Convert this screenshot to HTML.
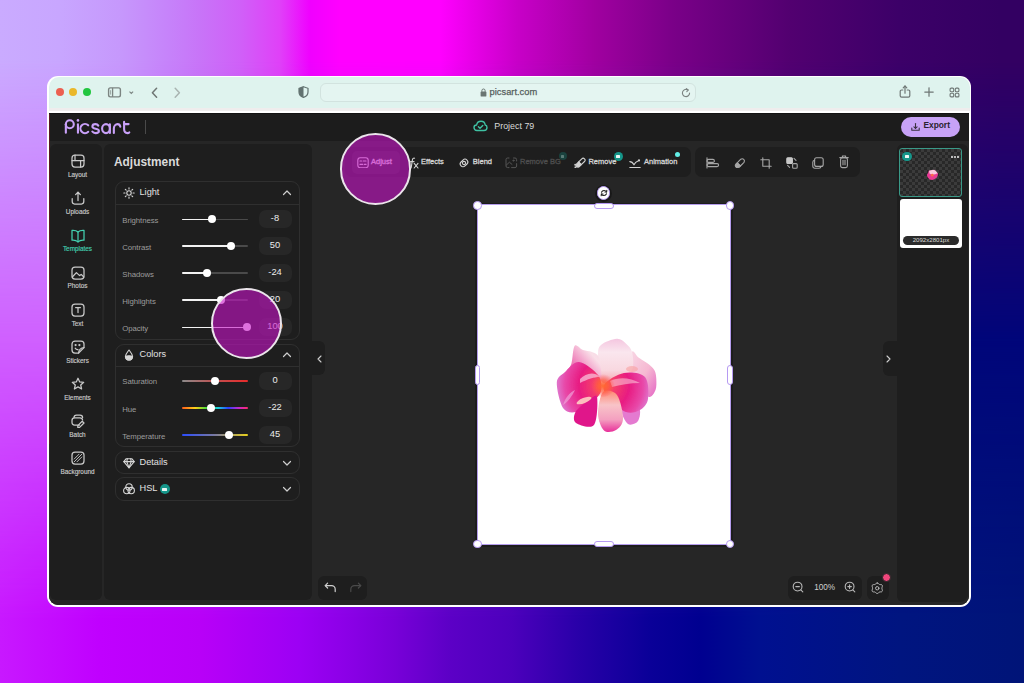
<!DOCTYPE html>
<html><head><meta charset="utf-8">
<style>
*{margin:0;padding:0;box-sizing:border-box}
html,body{width:1024px;height:683px;overflow:hidden}
body{position:relative;font-family:"Liberation Sans",sans-serif;background:#1a0a6d}
.a{position:absolute}
.bgB{left:0;top:0;width:1024px;height:683px;background:linear-gradient(90deg,#d060ff 0px,#d060ff 47px,#00067a 971px,#00067a 1024px)}
.bgC{left:0;top:0;width:1024px;height:683px;background:linear-gradient(90deg,#c818ff 0px,#c000ff 100px,#b800f8 200px,#9c00f4 300px,#8a00e6 350px,#7800d8 395px,#5c00c6 450px,#4c00bc 512px,#2800a8 580px,#0a0098 650px,#000090 700px,#001090 760px,#001580 900px,#001478 1024px);
 -webkit-mask-image:linear-gradient(180deg,transparent 0,transparent 340px,#000 620px,#000 683px)}
.bgA{left:0;top:0;width:1024px;height:683px;background:linear-gradient(90deg,#caabff 0px,#c8a6ff 60px,#c698fc 120px,#c682fa 170px,#c874f8 200px,#d060f8 240px,#e040f8 280px,#f000ff 310px,#ff00ff 340px,#ff00ff 440px,#c800c8 517px,#a000a0 595px,#7a0088 673px,#520070 790px,#3c0068 900px,#330062 1000px,#330062 1024px);
 -webkit-mask-image:linear-gradient(180deg,#000 0,#000 60px,transparent 340px)}
.win{left:47px;top:76px;width:924px;height:531px;border-radius:11px;background:#fff}
.tab{left:48.5px;top:77px;width:921px;height:31px;border-radius:10px 10px 0 0;background:#dff3ee}
.tabline{left:48.5px;top:108px;width:921px;height:3px;background:#efeded}
.app{left:49px;top:112.5px;width:920px;height:492px;background:#1c1c1c;border-radius:0 0 9px 9px;overflow:hidden}
.ws{left:49px;top:141px;width:920px;height:463.5px;background:#262626;border-radius:0 0 9px 9px}
.panel{background:#1e1e1e}
.txt{white-space:nowrap;line-height:1}
</style></head><body>
<div class="a bgB"></div>
<div class="a bgC"></div>
<div class="a bgA"></div>

<div class="a win"></div>
<div class="a tab"></div>
<div class="a tabline"></div>
<div class="a app"></div>
<div class="a ws"></div>


<!-- tab bar -->
<div class="a" style="left:55.9px;top:88.3px;width:8.2px;height:8.2px;border-radius:50%;background:#ec6050"></div>
<div class="a" style="left:69.2px;top:88.3px;width:8.2px;height:8.2px;border-radius:50%;background:#eab82a"></div>
<div class="a" style="left:82.5px;top:88.3px;width:8.2px;height:8.2px;border-radius:50%;background:#22c640"></div>
<svg class="a" style="left:106px;top:86px" width="32" height="14" viewBox="0 0 32 14" fill="none" stroke="#7c8582" stroke-width="1.2">
<rect x="2.6" y="1.9" width="11.8" height="9" rx="1.8" stroke-width="1.4"/><line x1="6.6" y1="1.9" x2="6.6" y2="10.9" stroke-width="1.3"/>
<line x1="4.6" y1="4.2" x2="4.6" y2="8.6" stroke-width="0.7"/>
<polyline points="23.5,5.6 25.3,7.4 27.1,5.6" stroke-width="1.1"/></svg>
<svg class="a" style="left:148px;top:86px" width="36" height="14" viewBox="0 0 36 14" fill="none" stroke-width="1.5" stroke-linecap="round" stroke-linejoin="round">
<polyline points="8.6,2.2 4.4,6.7 8.6,11.2" stroke="#6f7674"/><polyline points="27.2,2.2 31.4,6.7 27.2,11.2" stroke="#a9b4b1"/></svg>
<svg class="a" style="left:298.4px;top:86.4px" width="11" height="12" viewBox="0 0 11 12">
<path d="M5.5 0.7 L10 2.3 V5.9 C10 8.7 8 10.5 5.5 11.4 C3 10.5 1 8.7 1 5.9 V2.3 Z" fill="none" stroke="#627270" stroke-width="1.2"/>
<path d="M5.5 0.7 V11.4 C3 10.5 1 8.7 1 5.9 V2.3 Z" fill="#627270"/></svg>
<div class="a" style="left:319.5px;top:83.3px;width:376px;height:18.5px;border-radius:6px;background:#e4f5f1;border:1px solid #d2e3df"></div>
<svg class="a" style="left:479.6px;top:88.4px" width="7" height="9" viewBox="0 0 7 9"><rect x="0.6" y="3.6" width="5.8" height="5" rx="0.9" fill="#6a7572"/><path d="M1.9 3.8 V2.6 A1.6 1.6 0 0 1 5.1 2.6 V3.8" fill="none" stroke="#6a7572" stroke-width="1"/></svg>
<div class="a txt" style="left:489.6px;top:88.2px;font-size:9.3px;color:#56605d;-webkit-text-stroke:0.25px #56605d">picsart.com</div>
<svg class="a" style="left:680px;top:86.5px" width="12" height="12" viewBox="0 0 12 12" fill="none" stroke="#7b8381" stroke-width="1.1" stroke-linecap="round">
<path d="M9.6 6 A3.6 3.6 0 1 1 8 3"/><polyline points="6.5,1.6 8.2,3 6.8,4.6"/></svg>
<svg class="a" style="left:899.4px;top:85.2px" width="12" height="13" viewBox="0 0 12 13" fill="none" stroke="#6f7775" stroke-width="1.2" stroke-linecap="round" stroke-linejoin="round">
<path d="M3.8 5 H2.6 A1.4 1.4 0 0 0 1.2 6.4 V10.8 A1.4 1.4 0 0 0 2.6 12.2 H9.4 A1.4 1.4 0 0 0 10.8 10.8 V6.4 A1.4 1.4 0 0 0 9.4 5 H8.2"/>
<line x1="6" y1="1.2" x2="6" y2="8.2"/><polyline points="4.2,2.8 6,1 7.8,2.8"/></svg>
<svg class="a" style="left:924.2px;top:87.2px" width="10" height="10" viewBox="0 0 10 10" stroke="#6f7775" stroke-width="1.25" stroke-linecap="round">
<line x1="5" y1="0.8" x2="5" y2="9.2"/><line x1="0.8" y1="5" x2="9.2" y2="5"/></svg>
<svg class="a" style="left:948.5px;top:87px" width="11" height="11" viewBox="0 0 11 11" fill="none" stroke="#6f7775" stroke-width="1.1">
<rect x="1.1" y="1.1" width="3.6" height="3.6" rx="1"/><rect x="6.3" y="1.1" width="3.6" height="3.6" rx="1"/>
<rect x="1.1" y="6.3" width="3.6" height="3.6" rx="1"/><rect x="6.3" y="6.3" width="3.6" height="3.6" rx="1"/></svg>


<!-- panels -->
<div class="a panel" style="left:50px;top:143.5px;width:52px;height:456px;border-radius:6px"></div>
<div class="a" style="left:49px;top:112.5px;width:1px;height:331px;background:#5a1422"></div>
<div class="a panel" style="left:104px;top:143.5px;width:207.7px;height:456px;border-radius:6px"></div>
<div class="a panel" style="left:896.7px;top:143.5px;width:71.3px;height:458px;border-radius:6px 6px 8px 6px"></div>
<div class="a panel" style="left:311px;top:341px;width:14px;height:34px;border-radius:0 6px 6px 0"></div>
<div class="a panel" style="left:883.3px;top:341.3px;width:14px;height:34.7px;border-radius:6px 0 0 6px"></div>

<!-- sidebar -->
<svg class="a" style="left:70.5px;top:154.3px" width="14" height="14" viewBox="0 0 14 14" fill="none" stroke="#c9c9c9" stroke-width="1.25" stroke-linecap="round" stroke-linejoin="round"><rect x="1" y="1" width="12" height="12" rx="3"/><line x1="1" y1="6.6" x2="13" y2="6.6"/><line x1="4" y1="1" x2="4" y2="6.6"/><line x1="9.6" y1="6.6" x2="9.6" y2="13"/></svg>
<div class="a txt" style="left:50px;width:55px;text-align:center;top:172.0px;font-size:6.4px;color:#c9c9c9;-webkit-text-stroke:0.15px #c9c9c9;">Layout</div>
<svg class="a" style="left:70.5px;top:191.4px" width="14" height="14" viewBox="0 0 14 14" fill="none" stroke="#c9c9c9" stroke-width="1.25" stroke-linecap="round" stroke-linejoin="round"><path d="M1.2 7.6 V10.6 A2.4 2.4 0 0 0 3.6 13 H10.4 A2.4 2.4 0 0 0 12.8 10.6 V7.6"/><line x1="7" y1="9.5" x2="7" y2="1.3"/><polyline points="4.6,3.6 7,1.2 9.4,3.6"/></svg>
<div class="a txt" style="left:50px;width:55px;text-align:center;top:209.1px;font-size:6.4px;color:#c9c9c9;-webkit-text-stroke:0.15px #c9c9c9;">Uploads</div>
<svg class="a" style="left:70.5px;top:228.5px" width="14" height="14" viewBox="0 0 14 14" fill="none" stroke="#44d1b1" stroke-width="1.25" stroke-linecap="round" stroke-linejoin="round"><path d="M7 3 C5.5 1.6 3.4 1.2 1 1.4 V11.2 C3.4 11 5.5 11.5 7 12.9 C8.5 11.5 10.6 11 13 11.2 V1.4 C10.6 1.2 8.5 1.6 7 3 Z"/><line x1="7" y1="3" x2="7" y2="12.9"/></svg>
<div class="a txt" style="left:50px;width:55px;text-align:center;top:246.2px;font-size:6.4px;color:#44d1b1;-webkit-text-stroke:0.15px #44d1b1;">Templates</div>
<svg class="a" style="left:70.5px;top:265.7px" width="14" height="14" viewBox="0 0 14 14" fill="none" stroke="#c9c9c9" stroke-width="1.25" stroke-linecap="round" stroke-linejoin="round"><rect x="1" y="1" width="12" height="12" rx="3"/><path d="M1.3 11 L5.4 6.6 L8.6 9.6 L10.2 8.4 L12.8 11"/></svg>
<div class="a txt" style="left:50px;width:55px;text-align:center;top:283.4px;font-size:6.4px;color:#c9c9c9;-webkit-text-stroke:0.15px #c9c9c9;">Photos</div>
<svg class="a" style="left:70.5px;top:302.8px" width="14" height="14" viewBox="0 0 14 14" fill="none" stroke="#c9c9c9" stroke-width="1.25" stroke-linecap="round" stroke-linejoin="round"><rect x="1" y="1" width="12" height="12" rx="3"/><line x1="4.6" y1="4.6" x2="9.4" y2="4.6"/><line x1="7" y1="4.6" x2="7" y2="9.6"/></svg>
<div class="a txt" style="left:50px;width:55px;text-align:center;top:320.5px;font-size:6.4px;color:#c9c9c9;-webkit-text-stroke:0.15px #c9c9c9;">Text</div>
<svg class="a" style="left:70.5px;top:339.9px" width="14" height="14" viewBox="0 0 14 14" fill="none" stroke="#c9c9c9" stroke-width="1.25" stroke-linecap="round" stroke-linejoin="round"><path d="M13 7.6 V4 A3 3 0 0 0 10 1 H4 A3 3 0 0 0 1 4 V10 A3 3 0 0 0 4 13 H7.6 Z"/><path d="M7.6 13 C7.6 10 10 7.6 13 7.6"/><circle cx="4.6" cy="5" r="0.5"/><circle cx="8.4" cy="5" r="0.5"/><path d="M4.2 8.2 C5 9.4 6 9.8 7 9.6"/></svg>
<div class="a txt" style="left:50px;width:55px;text-align:center;top:357.6px;font-size:6.4px;color:#c9c9c9;-webkit-text-stroke:0.15px #c9c9c9;">Stickers</div>
<svg class="a" style="left:70.5px;top:377.0px" width="14" height="14" viewBox="0 0 14 14" fill="none" stroke="#c9c9c9" stroke-width="1.25" stroke-linecap="round" stroke-linejoin="round"><path d="M7 1.2 L8.7 4.9 L12.7 5.3 L9.7 8 L10.6 12 L7 9.9 L3.4 12 L4.3 8 L1.3 5.3 L5.3 4.9 Z"/></svg>
<div class="a txt" style="left:50px;width:55px;text-align:center;top:394.7px;font-size:6.4px;color:#c9c9c9;-webkit-text-stroke:0.15px #c9c9c9;">Elements</div>
<svg class="a" style="left:70.5px;top:414.1px" width="14" height="14" viewBox="0 0 14 14" fill="none" stroke="#c9c9c9" stroke-width="1.25" stroke-linecap="round" stroke-linejoin="round"><path d="M3 3.5 C3 2 4 1 5.5 1 H9 C10.6 1 11.6 2 11.6 3.5"/><path d="M8.5 11 H3.6 C2 11 1 10 1 8.5 V6.4 C1 4.9 2 3.9 3.6 3.9 H9 C10.4 3.9 11.4 4.7 11.6 6"/><path d="M6.8 11.6 L11.2 7.2 L13 9 L8.6 13.4 L6.8 13.4 Z"/></svg>
<div class="a txt" style="left:50px;width:55px;text-align:center;top:431.8px;font-size:6.4px;color:#c9c9c9;-webkit-text-stroke:0.15px #c9c9c9;">Batch</div>
<svg class="a" style="left:70.5px;top:451.3px" width="14" height="14" viewBox="0 0 14 14" fill="none" stroke="#c9c9c9" stroke-width="1.25" stroke-linecap="round" stroke-linejoin="round"><rect x="1" y="1" width="12" height="12" rx="3"/><line x1="3.2" y1="8" x2="8" y2="3.2" stroke-width="0.9"/><line x1="3.2" y1="10.8" x2="10.8" y2="3.2" stroke-width="0.9"/><line x1="6" y1="10.8" x2="10.8" y2="6" stroke-width="0.9"/></svg>
<div class="a txt" style="left:50px;width:55px;text-align:center;top:469.0px;font-size:6.4px;color:#c9c9c9;-webkit-text-stroke:0.15px #c9c9c9;">Background</div>
<!-- adjustment panel -->
<div class="a txt" style="left:114px;top:156.6px;font-size:11.9px;font-weight:700;color:#dadada">Adjustment</div>
<div class="a" style="left:114.6px;top:180.8px;width:185.6px;height:159.2px;border:1px solid #2f2f2f;border-radius:9px"></div>
<svg class="a" style="left:122.6px;top:186.8px" width="12" height="12" viewBox="0 0 12 12" fill="none" stroke="#d6d6d6" stroke-width="1.1" stroke-linecap="round" stroke-linejoin="round"><circle cx="6" cy="6" r="2.2"/><line x1="6" y1="0.8" x2="6" y2="2"/><line x1="6" y1="10" x2="6" y2="11.2"/><line x1="0.8" y1="6" x2="2" y2="6"/><line x1="10" y1="6" x2="11.2" y2="6"/><line x1="2.3" y1="2.3" x2="3.2" y2="3.2"/><line x1="8.8" y1="8.8" x2="9.7" y2="9.7"/><line x1="2.3" y1="9.7" x2="3.2" y2="8.8"/><line x1="8.8" y1="3.2" x2="9.7" y2="2.3"/></svg><div class="a txt" style="left:139.5px;top:188.1px;font-size:9.2px;color:#e2e2e2">Light</div>
<svg class="a" style="left:282.3px;top:188.5px" width="10" height="8" viewBox="0 0 10 8" fill="none" stroke="#cfcfcf" stroke-width="1.2" stroke-linecap="round" stroke-linejoin="round"><polyline points="1.5,5.5 5,2 8.5,5.5"/></svg>
<div class="a" style="left:115.6px;top:203.6px;width:183.6px;height:1px;background:#2f2f2f"></div>
<div class="a txt" style="left:122.3px;top:216.8px;font-size:7.8px;letter-spacing:-0.08px;color:#9c9c9c">Brightness</div><div class="a" style="left:181.6px;top:218.6px;width:66.2px;height:1.5px;background:#4a4a4a;border-radius:1px"></div><div class="a" style="left:181.6px;top:218.6px;width:30.1px;height:1.5px;background:#f2f2f2;border-radius:1px"></div><div class="a" style="left:207.7px;top:215.3px;width:8px;height:8px;border-radius:50%;background:#fff"></div><div class="a" style="left:258.5px;top:210.3px;width:33px;height:17.8px;border-radius:7px;background:#272727"></div><div class="a txt" style="left:258.5px;width:33px;text-align:center;top:214.3px;font-size:9.3px;color:#ececec">-8</div>
<div class="a txt" style="left:122.3px;top:243.5px;font-size:7.8px;letter-spacing:-0.08px;color:#9c9c9c">Contrast</div><div class="a" style="left:181.6px;top:245.2px;width:66.2px;height:1.5px;background:#4a4a4a;border-radius:1px"></div><div class="a" style="left:181.6px;top:245.2px;width:49.4px;height:1.5px;background:#f2f2f2;border-radius:1px"></div><div class="a" style="left:227.0px;top:242.0px;width:8px;height:8px;border-radius:50%;background:#fff"></div><div class="a" style="left:258.5px;top:237.0px;width:33px;height:17.8px;border-radius:7px;background:#272727"></div><div class="a txt" style="left:258.5px;width:33px;text-align:center;top:241.0px;font-size:9.3px;color:#ececec">50</div>
<div class="a txt" style="left:122.3px;top:270.7px;font-size:7.8px;letter-spacing:-0.08px;color:#9c9c9c">Shadows</div><div class="a" style="left:181.6px;top:272.4px;width:66.2px;height:1.5px;background:#4a4a4a;border-radius:1px"></div><div class="a" style="left:181.6px;top:272.4px;width:25.2px;height:1.5px;background:#f2f2f2;border-radius:1px"></div><div class="a" style="left:202.8px;top:269.2px;width:8px;height:8px;border-radius:50%;background:#fff"></div><div class="a" style="left:258.5px;top:264.2px;width:33px;height:17.8px;border-radius:7px;background:#272727"></div><div class="a txt" style="left:258.5px;width:33px;text-align:center;top:268.2px;font-size:9.3px;color:#ececec">-24</div>
<div class="a txt" style="left:122.3px;top:297.5px;font-size:7.8px;letter-spacing:-0.08px;color:#9c9c9c">Highlights</div><div class="a" style="left:181.6px;top:299.2px;width:66.2px;height:1.5px;background:#4a4a4a;border-radius:1px"></div><div class="a" style="left:181.6px;top:299.2px;width:39.8px;height:1.5px;background:#f2f2f2;border-radius:1px"></div><div class="a" style="left:217.4px;top:296.0px;width:8px;height:8px;border-radius:50%;background:#fff"></div><div class="a" style="left:258.5px;top:291.0px;width:33px;height:17.8px;border-radius:7px;background:#272727"></div><div class="a txt" style="left:258.5px;width:33px;text-align:center;top:295.0px;font-size:9.3px;color:#ececec">20</div>
<div class="a txt" style="left:122.3px;top:324.9px;font-size:7.8px;letter-spacing:-0.08px;color:#9c9c9c">Opacity</div><div class="a" style="left:181.6px;top:326.6px;width:66.2px;height:1.5px;background:#4a4a4a;border-radius:1px"></div><div class="a" style="left:181.6px;top:326.6px;width:65.6px;height:1.5px;background:#f2f2f2;border-radius:1px"></div><div class="a" style="left:243.2px;top:323.4px;width:8px;height:8px;border-radius:50%;background:#fff"></div><div class="a" style="left:258.5px;top:318.4px;width:33px;height:17.8px;border-radius:7px;background:#272727"></div><div class="a txt" style="left:258.5px;width:33px;text-align:center;top:322.4px;font-size:9.3px;color:#ececec">100</div>
<div class="a" style="left:114.6px;top:343.5px;width:185.6px;height:103.9px;border:1px solid #2f2f2f;border-radius:9px"></div>
<svg class="a" style="left:122.6px;top:349.0px" width="12" height="12" viewBox="0 0 12 12" fill="none" stroke="#d6d6d6" stroke-width="1.1" stroke-linecap="round" stroke-linejoin="round"><path d="M6 1 C7.5 3 9.6 5.2 9.6 7.6 A3.6 3.6 0 0 1 2.4 7.6 C2.4 5.2 4.5 3 6 1 Z"/><path d="M2.6 7.4 C4 6.6 8 6.6 9.4 7.4 A3.4 3.4 0 0 1 2.6 7.4 Z" fill="#d6d6d6"/></svg><div class="a txt" style="left:139.5px;top:350.3px;font-size:9.2px;color:#e2e2e2">Colors</div>
<svg class="a" style="left:282.3px;top:351.0px" width="10" height="8" viewBox="0 0 10 8" fill="none" stroke="#cfcfcf" stroke-width="1.2" stroke-linecap="round" stroke-linejoin="round"><polyline points="1.5,5.5 5,2 8.5,5.5"/></svg>
<div class="a" style="left:115.6px;top:366px;width:183.6px;height:1px;background:#2f2f2f"></div>
<div class="a txt" style="left:122.3px;top:378.3px;font-size:7.8px;letter-spacing:-0.08px;color:#9c9c9c">Saturation</div><div class="a" style="left:181.6px;top:379.8px;width:66.2px;height:2px;background:linear-gradient(90deg,#8a8a8a,#c05050 50%,#e82a2a);border-radius:1px"></div><div class="a" style="left:211.0px;top:376.8px;width:8px;height:8px;border-radius:50%;background:#fff"></div><div class="a" style="left:258.5px;top:371.8px;width:33px;height:17.8px;border-radius:7px;background:#272727"></div><div class="a txt" style="left:258.5px;width:33px;text-align:center;top:375.8px;font-size:9.3px;color:#ececec">0</div>
<div class="a txt" style="left:122.3px;top:405.5px;font-size:7.8px;letter-spacing:-0.08px;color:#9c9c9c">Hue</div><div class="a" style="left:181.6px;top:407.0px;width:66.2px;height:2px;background:linear-gradient(90deg,#ff5a1a,#ffd21a 20%,#3adb3a 38%,#1ad0e0 55%,#2a40ff 70%,#c02ad0 85%,#ff2a6a);border-radius:1px"></div><div class="a" style="left:206.6px;top:404.0px;width:8px;height:8px;border-radius:50%;background:#fff"></div><div class="a" style="left:258.5px;top:399.0px;width:33px;height:17.8px;border-radius:7px;background:#272727"></div><div class="a txt" style="left:258.5px;width:33px;text-align:center;top:403.0px;font-size:9.3px;color:#ececec">-22</div>
<div class="a txt" style="left:122.3px;top:432.7px;font-size:7.8px;letter-spacing:-0.08px;color:#9c9c9c">Temperature</div><div class="a" style="left:181.6px;top:434.2px;width:66.2px;height:2px;background:linear-gradient(90deg,#2a4cff,#7a7aa0 50%,#e8d01a);border-radius:1px"></div><div class="a" style="left:224.9px;top:431.2px;width:8px;height:8px;border-radius:50%;background:#fff"></div><div class="a" style="left:258.5px;top:426.2px;width:33px;height:17.8px;border-radius:7px;background:#272727"></div><div class="a txt" style="left:258.5px;width:33px;text-align:center;top:430.2px;font-size:9.3px;color:#ececec">45</div>
<div class="a" style="left:114.6px;top:451.2px;width:185.6px;height:23.0px;border:1px solid #2f2f2f;border-radius:9px"></div>
<svg class="a" style="left:122.6px;top:456.8px" width="12" height="12" viewBox="0 0 12 12" fill="none" stroke="#d6d6d6" stroke-width="1.1" stroke-linecap="round" stroke-linejoin="round"><path d="M3 1.8 H9 L11.2 4.6 L6 10.8 L0.8 4.6 Z"/><line x1="0.8" y1="4.6" x2="11.2" y2="4.6"/><path d="M4.3 1.8 L3.8 4.6 L6 10.8 L8.2 4.6 L7.7 1.8"/></svg><div class="a txt" style="left:139.5px;top:458.1px;font-size:9.2px;color:#e2e2e2">Details</div>
<svg class="a" style="left:282.3px;top:458.8px" width="10" height="8" viewBox="0 0 10 8" fill="none" stroke="#cfcfcf" stroke-width="1.2" stroke-linecap="round" stroke-linejoin="round"><polyline points="1.5,2.5 5,6 8.5,2.5"/></svg>
<div class="a" style="left:114.6px;top:476.8px;width:185.6px;height:24.0px;border:1px solid #2f2f2f;border-radius:9px"></div>
<svg class="a" style="left:122.6px;top:482.8px" width="12" height="12" viewBox="0 0 12 12" fill="none" stroke="#d6d6d6" stroke-width="1.1" stroke-linecap="round" stroke-linejoin="round"><circle cx="6" cy="4" r="3.2"/><circle cx="3.8" cy="7.6" r="3.2"/><circle cx="8.2" cy="7.6" r="3.2"/></svg><div class="a txt" style="left:139.5px;top:484.1px;font-size:9.2px;color:#e2e2e2">HSL</div>
<svg class="a" style="left:282.3px;top:484.8px" width="10" height="8" viewBox="0 0 10 8" fill="none" stroke="#cfcfcf" stroke-width="1.2" stroke-linecap="round" stroke-linejoin="round"><polyline points="1.5,2.5 5,6 8.5,2.5"/></svg>
<div class="a" style="left:159.7px;top:484.3px;width:10px;height:10px;border-radius:50%;background:#16968a"></div><div class="a" style="left:162.4px;top:487.8px;width:4.6px;height:3px;border-radius:0.6px;background:#e8f6f4"></div>
<!-- workspace -->
<div class="a panel" style="left:345px;top:147.2px;width:346px;height:30.2px;border-radius:7px"></div>
<div class="a panel" style="left:694.6px;top:147.3px;width:165.2px;height:30px;border-radius:7px"></div>
<div class="a" style="left:351.7px;top:151.4px;width:48.5px;height:22.3px;border-radius:5px;background:#2c2c2c"></div>
<svg class="a" style="left:356.5px;top:156.8px" width="12" height="11.5" viewBox="0 0 12 11.5" fill="none" stroke="#f0f0f0" stroke-width="1.1" stroke-linecap="round" stroke-linejoin="round"><rect x="0.8" y="0.8" width="10.4" height="9.9" rx="2.4"/><line x1="3" y1="4" x2="4.6" y2="4"/><line x1="6.2" y1="4" x2="9" y2="4"/><line x1="3" y1="7.4" x2="5.8" y2="7.4"/><line x1="7.4" y1="7.4" x2="9" y2="7.4"/></svg>
<div class="a txt" style="left:371px;top:158.2px;font-size:7.5px;font-weight:400;color:#f0f0f0;-webkit-text-stroke:0.3px #f0f0f0">Adjust</div>
<svg class="a" style="left:408.5px;top:156.5px" width="10" height="12" viewBox="0 0 10 12" fill="none" stroke="#d2d2d2" stroke-width="1.1" stroke-linecap="round" stroke-linejoin="round"><path d="M5.6 1.2 C4.4 0.9 3.6 1.6 3.4 2.8 L2.2 10.6 C2 11.4 1.4 11.6 0.8 11.4"/><line x1="1.6" y1="4.6" x2="5" y2="4.6"/><line x1="5.2" y1="6.4" x2="9" y2="11"/><line x1="9" y1="6.4" x2="5.2" y2="11"/></svg>
<div class="a txt" style="left:421px;top:158.2px;font-size:7.5px;font-weight:400;color:#d4d4d4;-webkit-text-stroke:0.3px #d4d4d4">Effects</div>
<svg class="a" style="left:457.5px;top:156.6px" width="12" height="12" viewBox="0 0 12 12" fill="none" stroke="#d2d2d2" stroke-width="1.1" stroke-linecap="round" stroke-linejoin="round"><rect x="1.8" y="3.2" width="8.4" height="5.6" rx="2.8" transform="rotate(-45 6 6)"/><circle cx="6" cy="6" r="1.6"/></svg>
<div class="a txt" style="left:472.8px;top:158.2px;font-size:7.5px;font-weight:400;color:#d4d4d4;-webkit-text-stroke:0.3px #d4d4d4">Blend</div>
<svg class="a" style="left:505px;top:157px" width="12.5" height="11.5" viewBox="0 0 12.5 11.5" fill="none" stroke="#555" stroke-width="1.0" stroke-linecap="round" stroke-linejoin="round"><path d="M4 1 H2.6 A1.6 1.6 0 0 0 1 2.6 V9 A1.6 1.6 0 0 0 2.6 10.6 H4"/><path d="M8.5 1 H10 A1.6 1.6 0 0 1 11.6 2.6 V4"/><path d="M1.4 8 L4.4 5.2 L7 7.4"/><path d="M6.6 10.6 H10 A1.6 1.6 0 0 0 11.6 9 V6.6"/><circle cx="8.4" cy="3.6" r="0.6"/></svg>
<div class="a txt" style="left:520px;top:158.2px;font-size:7.5px;font-weight:400;color:#4e4e4e;-webkit-text-stroke:0.3px #4e4e4e">Remove BG</div>
<div class="a" style="left:558.6px;top:152.4px;width:8px;height:8px;border-radius:50%;background:#1a423e"></div><div class="a" style="left:560.7px;top:155.3px;width:3.8px;height:2.4px;background:#5a7a76;border-radius:0.5px"></div>
<svg class="a" style="left:574.3px;top:156.8px" width="11.5" height="11.5" viewBox="0 0 11.5 11.5" fill="none" stroke="#d2d2d2" stroke-width="1.1" stroke-linecap="round" stroke-linejoin="round"><path d="M4.6 5 L7.8 1.8 A1.9 1.9 0 0 1 10.5 4.5 L7.3 7.7 Z" fill="none"/><path d="M4.6 5 L7.3 7.7 L5.4 9.6 A1.9 1.9 0 0 1 2.7 6.9 Z" fill="#d2d2d2"/><circle cx="1.5" cy="10.4" r="0.5" fill="#d2d2d2"/><circle cx="1.2" cy="7.8" r="0.4" fill="#d2d2d2"/></svg>
<div class="a txt" style="left:588.4px;top:158.2px;font-size:7.5px;font-weight:400;color:#d4d4d4;-webkit-text-stroke:0.3px #d4d4d4">Remove</div>
<div class="a" style="left:613.5px;top:151.8px;width:9px;height:9px;border-radius:50%;background:#15968a"></div><div class="a" style="left:615.9px;top:155px;width:4.2px;height:2.6px;background:#eaf6f4;border-radius:0.5px"></div>
<svg class="a" style="left:629.3px;top:157.5px" width="12.5" height="10.5" viewBox="0 0 12.5 10.5" fill="none" stroke="#d2d2d2" stroke-width="1.1" stroke-linecap="round" stroke-linejoin="round"><line x1="0.8" y1="9.6" x2="11.2" y2="9.6"/><path d="M0.8 3.6 C2.6 3.6 3.8 4.6 5 6.8 C6 4.6 7.4 3.4 9 3"/><circle cx="10" cy="2.4" r="1.1" fill="#d2d2d2" stroke="none"/></svg>
<div class="a txt" style="left:644px;top:158.2px;font-size:7.5px;font-weight:400;color:#d4d4d4;-webkit-text-stroke:0.3px #d4d4d4">Animation</div>
<div class="a" style="left:675.1px;top:151.9px;width:5px;height:5px;border-radius:50%;background:#62eee6"></div>
<svg class="a" style="left:706px;top:156.5px" width="14" height="12" viewBox="0 0 14 12" fill="none" stroke="#a6a6a6" stroke-width="1.1" stroke-linecap="round" stroke-linejoin="round"><line x1="1" y1="0.8" x2="1" y2="11"/><rect x="1" y="2.4" width="7.4" height="3" rx="1.5"/><rect x="1" y="6.6" width="11.6" height="3" rx="1.5"/></svg>
<svg class="a" style="left:734.3px;top:156.9px" width="12" height="11.5" viewBox="0 0 12 11.5" fill="none" stroke="#a6a6a6" stroke-width="1.1" stroke-linecap="round" stroke-linejoin="round"><path d="M3.2 5.8 L6.8 2.2 A2.3 2.3 0 0 1 10 5.4 L6.4 9 Z"/><path d="M3.2 5.8 L6.4 9 L5 10.4 A2.3 2.3 0 0 1 1.8 7.2 Z" fill="#a6a6a6"/></svg>
<svg class="a" style="left:760.4px;top:156.5px" width="12" height="12" viewBox="0 0 12 12" fill="none" stroke="#a6a6a6" stroke-width="1.1" stroke-linecap="round" stroke-linejoin="round"><polyline points="2.8,0.8 2.8,9.2 11.2,9.2"/><polyline points="0.8,2.8 9.2,2.8 9.2,11.2"/></svg>
<svg class="a" style="left:786px;top:156.5px" width="12" height="12" viewBox="0 0 12 12" fill="none" stroke="#a6a6a6" stroke-width="1.1" stroke-linecap="round" stroke-linejoin="round"><rect x="0.8" y="0.8" width="5.6" height="5.6" rx="1" fill="#c8c8c8" stroke="#c8c8c8"/><rect x="6.6" y="6.6" width="4.6" height="4.6" rx="1"/><path d="M8 1.4 L10 3.4" /><path d="M1.6 8.4 L3.6 10.4"/></svg>
<svg class="a" style="left:811.8px;top:156.5px" width="12" height="12" viewBox="0 0 12 12" fill="none" stroke="#a6a6a6" stroke-width="1.1" stroke-linecap="round" stroke-linejoin="round"><rect x="2.6" y="0.8" width="8.6" height="8.6" rx="2"/><path d="M2.6 3.2 A2 2 0 0 0 0.8 5.2 V9.2 A2 2 0 0 0 2.8 11.2 H7 A2 2 0 0 0 9 9.4"/></svg>
<svg class="a" style="left:839.2px;top:155.2px" width="10" height="13.5" viewBox="0 0 10 13.5" fill="none" stroke="#a6a6a6" stroke-width="1.1" stroke-linecap="round" stroke-linejoin="round"><line x1="0.8" y1="2.6" x2="9.2" y2="2.6"/><path d="M3.4 2.6 V1 H6.6 V2.6"/><rect x="1.6" y="2.6" width="6.8" height="10" rx="1.8"/><line x1="4" y1="5.4" x2="4" y2="9.8"/><line x1="6" y1="5.4" x2="6" y2="9.8"/></svg>
<div class="a" style="left:474.5px;top:202.5px;width:258.5px;height:344.5px;background:rgba(0,0,0,0.25);border-radius:2px"></div>
<div class="a" style="left:476.8px;top:204.4px;width:254.4px;height:340.6px;background:#fff;border:1.8px solid #b49cec"></div>
<div class="a" style="left:473.2px;top:201.2px;width:8.5px;height:8.5px;border-radius:50%;background:#fff;border:1.2px solid #b69af2"></div>
<div class="a" style="left:725.8px;top:201.2px;width:8.5px;height:8.5px;border-radius:50%;background:#fff;border:1.2px solid #b69af2"></div>
<div class="a" style="left:473.2px;top:539.5px;width:8.5px;height:8.5px;border-radius:50%;background:#fff;border:1.2px solid #b69af2"></div>
<div class="a" style="left:725.8px;top:539.5px;width:8.5px;height:8.5px;border-radius:50%;background:#fff;border:1.2px solid #b69af2"></div>
<div class="a" style="left:594px;top:203px;width:20px;height:5.6px;border-radius:3px;background:#fff;border:1.2px solid #b69af2"></div>
<div class="a" style="left:594px;top:541px;width:20px;height:5.6px;border-radius:3px;background:#fff;border:1.2px solid #b69af2"></div>
<div class="a" style="left:474.7px;top:364.6px;width:5.8px;height:20.2px;border-radius:3px;background:#fff;border:1.2px solid #b69af2"></div>
<div class="a" style="left:727.2px;top:364.6px;width:5.8px;height:20.2px;border-radius:3px;background:#fff;border:1.2px solid #b69af2"></div>
<div class="a" style="left:595.2px;top:184.5px;width:17px;height:17px;border-radius:50%;background:rgba(0,0,0,0.35)"></div>
<div class="a" style="left:596.9px;top:186.2px;width:13.6px;height:13.6px;border-radius:50%;background:#fff;border:1.3px solid #b69af2"></div>
<svg class="a" style="left:599.7px;top:189px" width="8" height="8" viewBox="0 0 8 8" fill="none" stroke="#222" stroke-width="1.1" stroke-linecap="round" stroke-linejoin="round"><path d="M6.6 3 A2.8 2.8 0 0 0 1.5 3.2"/><polyline points="6.8,1.2 6.6,3 4.9,3"/><path d="M1.4 5 A2.8 2.8 0 0 0 6.5 4.8"/><polyline points="1.2,6.8 1.4,5 3.1,5"/></svg>
<div class="a panel" style="left:318px;top:576px;width:49px;height:23.5px;border-radius:6px"></div>
<svg class="a" style="left:323.5px;top:582px" width="14" height="11" viewBox="0 0 14 11" fill="none" stroke="#cfcfcf" stroke-width="1.2" stroke-linecap="round" stroke-linejoin="round"><polyline points="3.6,1.2 1.2,3.6 3.6,6"/><path d="M1.4 3.6 H7.6 A3.6 3.6 0 0 1 11.2 7.2 V9.6"/></svg>
<svg class="a" style="left:347.5px;top:582px" width="14" height="11" viewBox="0 0 14 11" fill="none" stroke="#4a4a4a" stroke-width="1.2" stroke-linecap="round" stroke-linejoin="round"><polyline points="10.4,1.2 12.8,3.6 10.4,6"/><path d="M12.6 3.6 H6.4 A3.6 3.6 0 0 0 2.8 7.2 V9.6"/></svg>
<div class="a panel" style="left:787.7px;top:576.1px;width:74.1px;height:23.7px;border-radius:6px"></div>
<svg class="a" style="left:792px;top:581px" width="12" height="12" viewBox="0 0 12 12" fill="none" stroke="#b8b8b8" stroke-width="1.1" stroke-linecap="round" stroke-linejoin="round"><circle cx="5.6" cy="5.6" r="4.4"/><line x1="3.8" y1="5.6" x2="7.4" y2="5.6"/><line x1="8.8" y1="8.8" x2="10.8" y2="10.8"/></svg>
<div class="a txt" style="left:814.2px;top:583.6px;font-size:8.2px;font-weight:400;color:#d0d0d0">100%</div>
<svg class="a" style="left:844.2px;top:581px" width="12" height="12" viewBox="0 0 12 12" fill="none" stroke="#b8b8b8" stroke-width="1.1" stroke-linecap="round" stroke-linejoin="round"><circle cx="5.6" cy="5.6" r="4.4"/><line x1="3.8" y1="5.6" x2="7.4" y2="5.6"/><line x1="5.6" y1="3.8" x2="5.6" y2="7.4"/><line x1="8.8" y1="8.8" x2="10.8" y2="10.8"/></svg>
<div class="a panel" style="left:867.2px;top:576.1px;width:21.5px;height:23.7px;border-radius:6px"></div>
<svg class="a" style="left:871.2px;top:581.8px" width="12.5" height="12.5" viewBox="0 0 12.5 12.5" fill="none" stroke="#b8b8b8" stroke-width="1.0" stroke-linecap="round" stroke-linejoin="round"><path d="M6.25 1 C7.4 1 7.8 2.2 8.6 2.5 C9.5 2.8 10.6 2.2 11.2 3.2 C11.8 4.2 10.9 5.1 10.9 6.25 C10.9 7.4 11.8 8.3 11.2 9.3 C10.6 10.3 9.5 9.7 8.6 10 C7.8 10.3 7.4 11.5 6.25 11.5 C5.1 11.5 4.7 10.3 3.9 10 C3 9.7 1.9 10.3 1.3 9.3 C0.7 8.3 1.6 7.4 1.6 6.25 C1.6 5.1 0.7 4.2 1.3 3.2 C1.9 2.2 3 2.8 3.9 2.5 C4.7 2.2 5.1 1 6.25 1 Z"/><circle cx="6.25" cy="6.25" r="1.7"/></svg>
<div class="a" style="left:882px;top:573.3px;width:9px;height:9px;border-radius:50%;background:#f0467c;border:1px solid #262626"></div>
<svg class="a" style="left:315.5px;top:354.5px" width="7" height="8" viewBox="0 0 7 8" fill="none" stroke="#cfcfcf" stroke-width="1.1" stroke-linecap="round" stroke-linejoin="round"><polyline points="5,1 2,4 5,7"/></svg>
<svg class="a" style="left:885.3px;top:354.8px" width="7" height="8" viewBox="0 0 7 8" fill="none" stroke="#cfcfcf" stroke-width="1.1" stroke-linecap="round" stroke-linejoin="round"><polyline points="2,1 5,4 2,7"/></svg>
<!-- flower & right panel & circles -->
<svg class="a" style="left:550px;top:333px" width="112" height="104" viewBox="0 0 112 104">
<defs>
<linearGradient id="gUL" x1="0" y1="1" x2="1" y2="0"><stop offset="0" stop-color="#e6308e"/><stop offset="0.45" stop-color="#f08cc0"/><stop offset="0.75" stop-color="#f9dfe8"/><stop offset="1" stop-color="#f7d2e2"/></linearGradient>
<linearGradient id="gT" x1="0" y1="0" x2="0" y2="1"><stop offset="0" stop-color="#f4c6e0"/><stop offset="0.3" stop-color="#fae6ee"/><stop offset="0.7" stop-color="#f8d8e0"/><stop offset="1" stop-color="#f4a0a8"/></linearGradient>
<linearGradient id="gR" x1="0" y1="0" x2="1" y2="1"><stop offset="0" stop-color="#f8dae6"/><stop offset="0.55" stop-color="#f6b8d2"/><stop offset="1" stop-color="#e466c4"/></linearGradient>
<radialGradient id="gM" cx="54" cy="52" r="46" gradientUnits="userSpaceOnUse"><stop offset="0" stop-color="#ff6a3a"/><stop offset="0.22" stop-color="#f5406a"/><stop offset="0.55" stop-color="#e81c82"/><stop offset="0.85" stop-color="#e848a8"/><stop offset="1" stop-color="#e070c8"/></radialGradient>
<linearGradient id="gB" x1="0" y1="0" x2="0" y2="1"><stop offset="0" stop-color="#ff8870"/><stop offset="0.35" stop-color="#f8c4c8"/><stop offset="0.7" stop-color="#f4a0c0"/><stop offset="1" stop-color="#e8309a"/></linearGradient>
<radialGradient id="gc" cx="53" cy="53" r="12" gradientUnits="userSpaceOnUse"><stop offset="0" stop-color="#ff6a30"/><stop offset="0.5" stop-color="#ff5a40" stop-opacity="0.7"/><stop offset="1" stop-color="#ff5060" stop-opacity="0"/></radialGradient>
<filter id="bl" x="-10%" y="-10%" width="120%" height="120%"><feGaussianBlur stdDeviation="0.45"/></filter>
</defs>
<g filter="url(#bl)">
<path d="M81.9,18.7 C83.6,16.3 85.9,22.6 88.8,24.8 C91.7,27.0 97.7,30.3 100.2,32.4 C102.7,34.5 103.7,35.6 104.7,37.8 C105.7,40.0 106.2,43.0 106.3,46.1 C106.4,49.2 106.7,54.1 105.5,57.0 C104.3,59.9 101.8,64.6 99.0,64.0 C96.2,63.4 91.4,56.8 88.0,53.0 C84.6,49.2 79.0,45.5 78.0,40.0 C77.0,34.5 80.2,21.1 81.9,18.7 Z" fill="url(#gR)"/>
<path d="M51.0,12.0 C54.0,9.2 62.7,6.1 66.7,5.8 C70.7,5.5 73.4,8.3 75.8,10.4 C78.2,12.5 81.0,14.7 82.0,19.0 C83.0,23.3 84.4,32.2 82.0,37.0 C79.6,41.8 72.0,47.2 67.0,49.0 C62.0,50.8 54.0,52.2 51.0,48.0 C48.0,43.8 48.0,28.8 48.0,23.0 C48.0,17.2 48.0,14.8 51.0,12.0 Z" fill="url(#gT)"/>
<path d="M24.7,12.7 C26.6,10.5 30.2,16.0 33.0,17.0 C35.8,18.0 39.4,17.7 42.0,19.0 C44.6,20.3 47.6,20.5 49.0,25.0 C50.4,29.5 52.4,42.7 51.0,47.0 C49.6,51.3 44.2,52.3 40.0,52.0 C35.8,51.7 28.8,46.9 25.0,45.0 C21.2,43.1 16.6,42.2 16.0,40.0 C15.4,37.8 19.9,35.4 21.3,31.0 C22.7,26.6 22.8,14.9 24.7,12.7 Z" fill="url(#gUL)"/>
<path d="M72.0,77.0 C73.7,74.4 86.2,73.2 88.8,75.0 C91.4,76.8 89.7,85.4 88.0,88.0 C86.3,90.6 80.6,92.8 78.0,91.0 C75.4,89.2 70.3,79.6 72.0,77.0 Z" fill="#e47ad0"/>
<path d="M54.0,52.0 C56.2,47.7 67.4,41.3 74.0,40.0 C80.6,38.7 91.2,39.8 95.0,44.0 C98.8,48.2 98.8,60.7 98.0,66.0 C97.2,71.3 93.5,74.9 90.0,77.0 C86.5,79.1 80.8,80.6 76.0,79.0 C71.2,77.4 63.5,71.3 60.0,67.0 C56.5,62.7 51.8,56.3 54.0,52.0 Z" fill="url(#gM)"/>
<path d="M6.8,49.5 C7.1,43.7 11.4,42.3 15.0,39.0 C18.6,35.7 23.7,28.5 29.0,29.0 C34.3,29.5 44.5,37.4 48.0,42.0 C51.5,46.6 52.1,53.5 51.0,58.0 C49.9,62.5 45.0,66.6 41.0,70.0 C37.0,73.4 30.5,78.2 26.0,79.0 C21.5,79.8 16.1,79.7 13.0,75.0 C9.9,70.3 6.5,55.3 6.8,49.5 Z" fill="url(#gM)"/>
<path d="M53.0,59.0 C56.0,56.0 63.8,57.7 67.0,62.0 C70.2,66.3 73.2,80.4 73.0,86.0 C72.8,91.6 69.0,95.2 66.0,97.0 C63.0,98.8 56.9,100.1 54.0,97.5 C51.1,94.9 48.2,87.2 48.0,81.0 C47.8,74.8 50.0,62.0 53.0,59.0 Z" fill="url(#gB)"/>
<path d="M47.0,64.0 C48.0,67.8 47.4,87.8 44.0,92.0 C40.6,96.2 29.0,92.1 26.0,90.0 C23.0,87.9 23.6,82.5 25.5,79.0 C27.4,75.5 34.6,70.4 38.0,68.0 C41.4,65.6 46.0,60.2 47.0,64.0 Z" fill="#e0168a"/>
<path d="M13.0,72.0 C15.0,65.0 20.0,59.0 25.0,57.0 C22.0,63.0 18.0,69.0 13.0,72.0 Z" fill="#f0a0d8" opacity="0.7"/>
<path d="M30,46 C36,40 44,38 50,44 C44,44 38,46 30,50 Z" fill="#f8c8e0" opacity="0.7"/><path d="M60,48 C68,44 80,44 90,50 C80,50 70,52 62,54 Z" fill="#fbd0dc" opacity="0.55"/><ellipse cx="34" cy="67.5" rx="8" ry="2.6" transform="rotate(-22 34 67.5)" fill="#ffd8c8" opacity="0.85"/>
<ellipse cx="82" cy="36" rx="6" ry="3" fill="#f8a0a0" opacity="0.6"/>
<circle cx="53" cy="52" r="12" fill="url(#gc)"/>
</g></svg>
<div class="a" style="left:899px;top:148px;width:63px;height:48.5px;border-radius:3px;border:1.3px solid #3a9a88;background:repeating-conic-gradient(#3b3b3b 0 25%,#282828 0 50%) 0 0/6px 6px"></div>
<div class="a" style="left:902.3px;top:151.5px;width:9.7px;height:9.7px;border-radius:50%;background:#16968a"></div><div class="a" style="left:905px;top:155px;width:4.3px;height:2.7px;background:#f0f8f6;border-radius:0.5px"></div>
<div class="a" style="left:950.55px;top:155.5px;width:2.2px;height:2.2px;border-radius:1.1px;background:#ececec"></div>
<div class="a" style="left:953.55px;top:155.5px;width:2.2px;height:2.2px;border-radius:1.1px;background:#ececec"></div>
<div class="a" style="left:956.55px;top:155.5px;width:2.2px;height:2.2px;border-radius:1.1px;background:#ececec"></div>
<svg class="a" style="left:926px;top:168.5px" width="13" height="12" viewBox="0 0 112 104"><g><path d="M24,14 L48,13 L72,6 L84,20 L105,38 L100,60 L90,77 L72,89 L54,96 L30,90 L12,70 L7,50 L16,38 Z" fill="#e83a94"/><path d="M26,16 L60,7 L82,14 L100,36 L80,46 L50,50 L30,40 Z" fill="#f8c8dc"/><circle cx="54" cy="54" r="12" fill="#ff6a4a"/></g></svg>
<div class="a" style="left:900px;top:199.4px;width:61.8px;height:48.7px;border-radius:3px;background:#fff"></div>
<div class="a" style="left:902.6px;top:235.7px;width:56.8px;height:9.2px;border-radius:4.6px;background:#2b2b2b"></div>
<div class="a txt" style="left:902.6px;width:56.8px;text-align:center;top:237.2px;font-size:6.1px;color:#dadada">2092x2801px</div>
<div class="a" style="left:339.95px;top:133.45px;width:71.5px;height:71.5px;border-radius:50%;background:rgba(200,18,200,0.6);border:2.8px solid #ebe4eb"></div>
<div class="a" style="left:210.95px;top:287.95px;width:71.5px;height:71.5px;border-radius:50%;background:rgba(200,18,200,0.6);border:2.8px solid #ebe4eb"></div>
<!-- header -->
<div class="a" style="left:49px;top:112.5px;width:920px;height:1px;background:#121212"></div>
<svg class="a" style="left:60px;top:114px" width="76" height="26" viewBox="0 0 76 26" fill="none" stroke="#c8a0f8" stroke-width="2.1" stroke-linecap="round" stroke-linejoin="round">
<circle cx="9.8" cy="10.3" r="4"/><line x1="5.85" y1="10.3" x2="5.85" y2="18.8"/>
<circle cx="17.95" cy="6.4" r="1.3" fill="#c8a0f8" stroke="none"/><line x1="17.95" y1="10.4" x2="17.95" y2="18.8"/>
<path d="M28.2,11.3 A4.55,4.55 0 1 0 28.2,17.8"/>
<path d="M38.3,11.6 C37.7,10.6 36.7,10.1 35.5,10.1 C33.7,10.1 32.4,11.1 32.4,12.5 C32.4,14 33.8,14.4 35.6,14.7 C37.6,15 38.9,15.6 38.9,17 C38.9,18.3 37.5,19.1 35.6,19.1 C34.2,19.1 33,18.5 32.3,17.5"/>
<ellipse cx="46" cy="14.6" rx="3.9" ry="4.5"/><line x1="49.9" y1="10.3" x2="49.9" y2="18.9"/>
<path d="M53.85,18.9 V14.6 C53.85,12 55.6,10.1 57.6,10.1 C59.1,10.1 60,11 60.3,12.6"/>
<path d="M64.1,7.9 V15 C64.1,17.5 65.5,19.1 67.5,19.1 C68.3,19.1 68.9,18.8 69.3,18.3"/><line x1="64.1" y1="10.1" x2="68.6" y2="10.1"/>
</svg>
<div class="a" style="left:145px;top:120px;width:1px;height:14px;background:#4a4a4a"></div>
<svg class="a" style="left:473px;top:119.8px" width="15" height="12" viewBox="0 0 15 12" fill="none" stroke="#3fc1a3" stroke-width="1.4" stroke-linecap="round" stroke-linejoin="round">
<path d="M4 10.5 C1.8 10.5 1 9 1 7.6 C1 6 2.3 5 3.6 5 C4 2.6 6 1.2 8 1.2 C10.6 1.2 12 3.2 12.2 5 C13.3 5.2 14 6.3 14 7.6 C14 9.3 12.8 10.5 11 10.5 Z"/>
<polyline points="5.4,6.8 7,8.3 9.8,5.4"/></svg>
<div class="a txt" style="left:494.3px;top:121.5px;font-size:8.9px;color:#dadada">Project 79</div>
<div class="a" style="left:901px;top:116.5px;width:58.5px;height:20px;border-radius:10px;background:#c7a2f6"></div>
<svg class="a" style="left:911.4px;top:122.5px" width="9" height="8" viewBox="0 0 9 8" fill="none" stroke="#3a3040" stroke-width="1.1" stroke-linecap="round" stroke-linejoin="round">
<line x1="4.5" y1="0.6" x2="4.5" y2="5.2"/><polyline points="2.9,3.8 4.5,5.3 6.1,3.8"/><polyline points="0.8,5 0.8,7.3 8.2,7.3 8.2,5"/></svg>
<div class="a txt" style="left:923.4px;top:121.4px;font-size:8.4px;font-weight:700;color:#2a2230">Export</div>

</body></html>
